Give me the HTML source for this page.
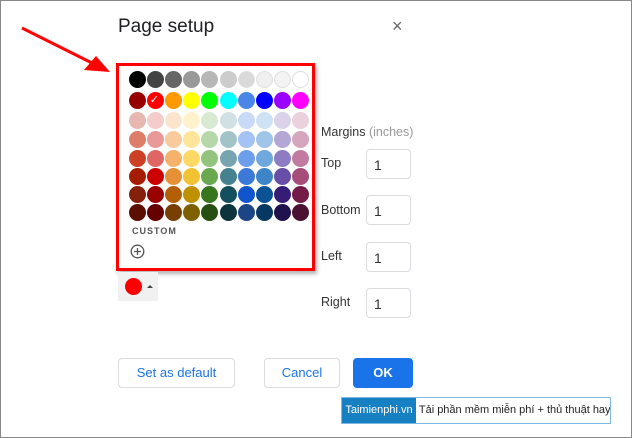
<!DOCTYPE html><html><head><style>
*{margin:0;padding:0;box-sizing:border-box}
html,body{width:632px;height:438px;overflow:hidden}
body{background:#fff;position:relative;font-family:"Liberation Sans",Arial,sans-serif}
.frame{position:absolute;left:0;top:0;width:632px;height:438px;border:1px solid #888}
.a{position:absolute}
.c{position:absolute;width:17px;height:17px;border-radius:50%}
.in{position:absolute;left:366px;width:45px;height:30px;border:1px solid #dadce0;border-radius:4px;font-size:14px;color:#333;padding:7px 0 0 7px}
.lb{position:absolute;left:321px;font-size:12.5px;color:#333}
.btn{position:absolute;top:358px;height:30px;border:1px solid #dadce0;border-radius:4px;font-size:13px;color:#1a73e8;text-align:center;line-height:28px;font-weight:500}
</style></head><body>
<div class="frame"></div>
<div class="a" style="left:118px;top:16px;font-size:19px;color:#202124">Page setup</div>
<div class="a" style="left:392px;top:16px;font-size:18px;color:#666">×</div>
<svg class="a" style="left:0;top:0" width="120" height="80"><line x1="22" y1="28" x2="98" y2="66" stroke="#f00" stroke-width="3"/><polygon points="110,72 84,70 96,56" fill="#f00"/></svg>
<div class="a" style="left:116px;top:63px;width:199px;height:208px;border:3px solid #f00;box-shadow:2px 3px 4px rgba(0,0,0,.3)"></div>
<div id="g"></div>
<div class="a" style="left:132px;top:226px;font-size:9px;font-weight:bold;letter-spacing:1px;color:#555">CUSTOM</div>
<svg class="a" style="left:130px;top:244px" width="15" height="15"><circle cx="7.5" cy="7.5" r="6.3" fill="none" stroke="#555" stroke-width="1.3"/><path d="M7.5 4v7M4 7.5h7" stroke="#555" stroke-width="1.3"/></svg>
<div class="a" style="left:118px;top:272px;width:40px;height:29px;background:#f1f1f1"></div>
<div class="a" style="left:125px;top:278px;width:17px;height:17px;border-radius:50%;background:#f00"></div>
<div class="a" style="left:147px;top:285px;border:3px solid transparent;border-bottom-color:#444;border-top:0"></div>
<div class="lb" style="top:125px"><b style="font-weight:500">Margins</b> <span style="color:#999">(inches)</span></div>
<div class="lb" style="top:156px">Top</div><div class="in" style="top:149px">1</div>
<div class="lb" style="top:203px">Bottom</div><div class="in" style="top:195px">1</div>
<div class="lb" style="top:249px">Left</div><div class="in" style="top:242px">1</div>
<div class="lb" style="top:295px">Right</div><div class="in" style="top:288px">1</div>
<div class="btn" style="left:118px;width:117px">Set as default</div>
<div class="btn" style="left:264px;width:76px">Cancel</div>
<div class="btn" style="left:353px;width:60px;background:#1a73e8;color:#fff;border-color:#1a73e8;font-weight:bold">OK</div>
<div class="a" style="left:341px;top:397px;width:270px;height:27px;border:1px solid #7fb8e0;font-size:11px;line-height:25px;color:#222;white-space:nowrap;overflow:hidden"><span style="display:inline-block;background:#1780c2;color:#fff;width:74px;text-align:center">Taimienphi.vn</span> Tải phần mềm miễn phí + thủ thuật hay</div>
<script>
var rows=[["#000","#434343","#666","#999","#b7b7b7","#ccc","#d9d9d9","#efefef","#f3f3f3","#fff"],
["#980000","#f00","#f90","#ff0","#0f0","#0ff","#4a86e8","#00f","#90f","#f0f"],
["#e6b8af","#f4cccc","#fce5cd","#fff2cc","#d9ead3","#d0e0e3","#c9daf8","#cfe2f3","#d9d2e9","#ead1dc"],
["#dd7e6b","#ea9999","#f9cb9c","#ffe599","#b6d7a8","#a2c4c9","#a4c2f4","#9fc5e8","#b4a7d6","#d5a6bd"],
["#cc4125","#e06666","#f6b26b","#ffd966","#93c47d","#76a5af","#6d9eeb","#6fa8dc","#8e7cc3","#c27ba0"],
["#a61c00","#c00","#e69138","#f1c232","#6aa84f","#45818e","#3c78d8","#3d85c6","#674ea7","#a64d79"],
["#85200c","#900","#b45f06","#bf9000","#38761d","#134f5c","#1155cc","#0b5394","#351c75","#741b47"],
["#5b0f00","#600","#783f04","#7f6000","#274e13","#0c343d","#1c4587","#073763","#20124d","#4c1130"]];
var ys=[79,100,120,139,158,176,194,212],h="";
rows.forEach(function(r,i){r.forEach(function(c,j){var x=137+j*18.2;h+='<div class="c" style="left:'+(x-8.5)+'px;top:'+(ys[i]-8.5)+'px;background:'+c+';'+(i==0&&j>5?'border:1px solid #e0e0e0':'')+'">'+(i==1&&j==1?'<span style="color:#fff;font-size:11px;position:absolute;left:3px;top:1px">✓</span>':'')+'</div>'})});
document.getElementById('g').innerHTML=h;
</script>
</body></html>
